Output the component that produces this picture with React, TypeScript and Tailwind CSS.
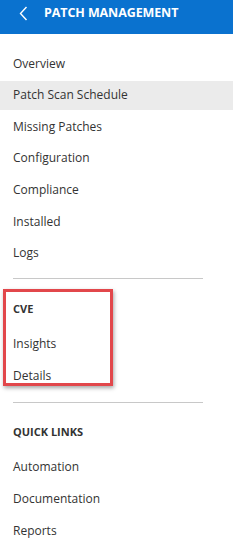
import React from "react";

const font = { fontFamily: '"Open Sans", "Noto Sans", sans-serif' };

function Item({ label, active = false }: { label: string; active?: boolean }) {
  return (
    <div
      className={`h-[29px] flex items-center pl-[13px] text-[12px] text-[#333333] ${
        active ? "bg-[#ebebeb]" : ""
      }`}
    >
      {label}
    </div>
  );
}

export default function App() {
  return (
    <div className="w-[233px] h-[546px] bg-white overflow-hidden" style={font}>
      <div className="h-[34px] bg-[#0a72cf] flex items-center">
        <svg width="44" height="34" viewBox="0 0 44 34" className="shrink-0 -mt-[1px]">
          <path d="M26.5 7 L20.5 13.5 L26.5 20" fill="none" stroke="#ffffff" strokeWidth="1.4" />
        </svg>
        <span className="text-white font-bold text-[12.5px] tracking-[-0.1px] -mt-[7px]">PATCH MANAGEMENT</span>
      </div>
      <div className="flex flex-col gap-[2.67px] pt-[15px]">
        <Item label="Overview" />
        <Item label="Patch Scan Schedule" active />
        <Item label="Missing Patches" />
        <Item label="Configuration" />
        <Item label="Compliance" />
        <Item label="Installed" />
        <Item label="Logs" />
      </div>
      <div className="mt-[10px] mx-[13px] w-[190px] h-px bg-[#c8c8c8]" />
      <div className="relative mt-[17px]">
        <div className="h-[29px] flex items-center pl-[13px] text-[11px] font-bold text-[#333333] -mt-[1px]">
          CVE
        </div>
        <div className="flex flex-col gap-[2.67px] mt-[6px]">
          <Item label="Insights" />
          <Item label="Details" />
        </div>
        <div className="absolute left-[3px] top-[-6px] w-[110px] h-[97px] border-[3px] border-[#e2474b] shadow-[1px_2px_4px_rgba(0,0,0,0.35)] pointer-events-none" />
      </div>
      <div className="mt-[11px] mx-[13px] w-[190px] h-px bg-[#c8c8c8]" />
      <div className="mt-[15px]">
        <div className="h-[29px] flex items-center pl-[13px] text-[11px] font-bold text-[#333333]">
          QUICK LINKS
        </div>
        <div className="flex flex-col gap-[3px] mt-[6px]">
          <Item label="Automation" />
          <Item label="Documentation" />
          <Item label="Reports" />
        </div>
      </div>
    </div>
  );
}
